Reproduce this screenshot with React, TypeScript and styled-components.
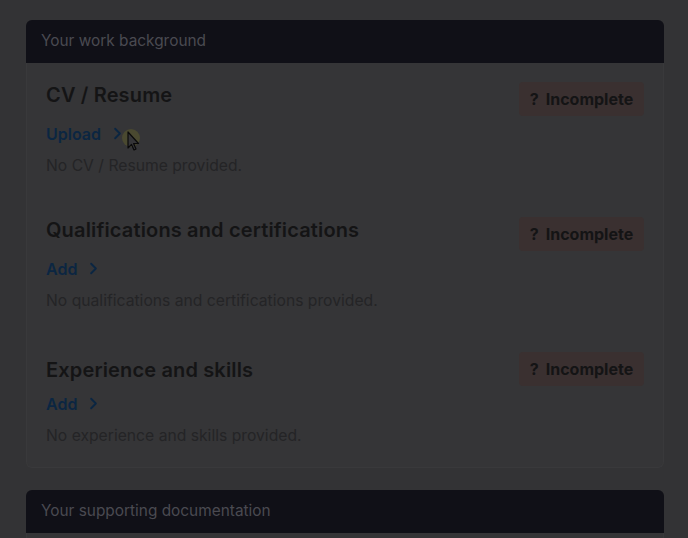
import React from "react";
import styled, { createGlobalStyle } from "styled-components";
import { ChevronRight } from "lucide-react";

const Global = createGlobalStyle`
  html, body { margin: 0; padding: 0; background: #333335; }
  body { font-family: Inter, "Open Sans", Lato, sans-serif; overflow: hidden; }
  * { box-sizing: border-box; }
`;

const Page = styled.div`
  position: relative;
  display: flex;
  flex-direction: column;
  gap: 22px;
  padding: 20px 24px 0 26px;
  height: 538px;
  overflow: hidden;
`;

const Panel = styled.section`
  display: flex;
  flex-direction: column;
`;

const PanelHeader = styled.div`
  height: 43px;
  display: flex;
  align-items: center;
  padding: 0 15px 3px;
  background: #101017;
  color: #4a4a51;
  font-size: 15.4px;
  border-radius: 6px 6px 0 0;
`;

const PanelBody = styled.div`
  background: #353537;
  border: 1px solid #39393b;
  border-top: none;
  border-radius: 0 0 6px 6px;
  padding: 19px 19px 19px;
  display: flex;
  flex-direction: column;
  gap: 39px;
`;

const Item = styled.div`
  display: flex;
  justify-content: space-between;
  align-items: flex-start;
`;

const ItemText = styled.div`
  display: flex;
  flex-direction: column;
`;

const Title = styled.h3<{ $shift?: number }>`
  margin: ${(p) => p.$shift ?? 0}px 0 0;
  font-size: 20px;
  line-height: 26px;
  font-weight: 600;
  color: #141415;
  letter-spacing: 0.15px;
`;

const ActionLink = styled.a<{ $shift?: number }>`
  margin-top: ${(p) => 14 - (p.$shift ?? 0)}px;
  display: inline-flex;
  align-items: center;
  gap: 7px;
  height: 24px;
  font-size: 16px;
  line-height: 24px;
  font-weight: 600;
  color: #0b2642;
  text-decoration: none;
  width: max-content;

  svg {
    margin-top: -2px;
  }
`;

const Description = styled.p`
  margin: 8px 0 0;
  font-size: 15.7px;
  line-height: 24px;
  color: #242426;
`;

const Badge = styled.span`
  width: 125px;
  height: 34px;
  display: inline-flex;
  align-items: center;
  justify-content: center;
  gap: 7px;
  border-radius: 4px;
  background: #3a3030;
  color: #141415;
  font-size: 16px;
  font-weight: 700;
  flex-shrink: 0;
`;

const Cursor = styled.div`
  position: absolute;
  left: 121px;
  top: 127px;
  width: 24px;
  height: 28px;
  pointer-events: none;
`;

const items = [
  { title: "CV / Resume", action: "Upload", desc: "No CV / Resume provided.", shift: 0 },
  {
    title: "Qualifications and certifications",
    action: "Add",
    desc: "No qualifications and certifications provided.",
    shift: 0,
  },
  { title: "Experience and skills", action: "Add", desc: "No experience and skills provided.", shift: 5 },
];

export default function App() {
  return (
    <>
      <Global />
      <Page>
        <Panel>
          <PanelHeader>Your work background</PanelHeader>
          <PanelBody>
            {items.map((it) => (
              <Item key={it.title}>
                <ItemText>
                  <Title $shift={it.shift}>{it.title}</Title>
                  <ActionLink href="#" $shift={it.shift}>
                    {it.action}
                    <ChevronRight size={19} strokeWidth={2.4} />
                  </ActionLink>
                  <Description>{it.desc}</Description>
                </ItemText>
                <Badge>
                  <span>?</span>
                  <span>Incomplete</span>
                </Badge>
              </Item>
            ))}
          </PanelBody>
        </Panel>
        <Panel>
          <PanelHeader>Your supporting documentation</PanelHeader>
          <PanelBody />
        </Panel>
        <Cursor>
          <svg width="24" height="28" viewBox="0 0 24 28">
            <circle cx="10" cy="11" r="9" fill="#4a4930" />
            <path
              d="M7 5 L7 21 L10.5 17.5 L13 23 L15 22 L12.6 16.6 L17.5 16.5 Z"
              fill="#353537"
              stroke="#0a0a0a"
              strokeWidth="1.2"
              strokeLinejoin="round"
            />
          </svg>
        </Cursor>
      </Page>
    </>
  );
}
